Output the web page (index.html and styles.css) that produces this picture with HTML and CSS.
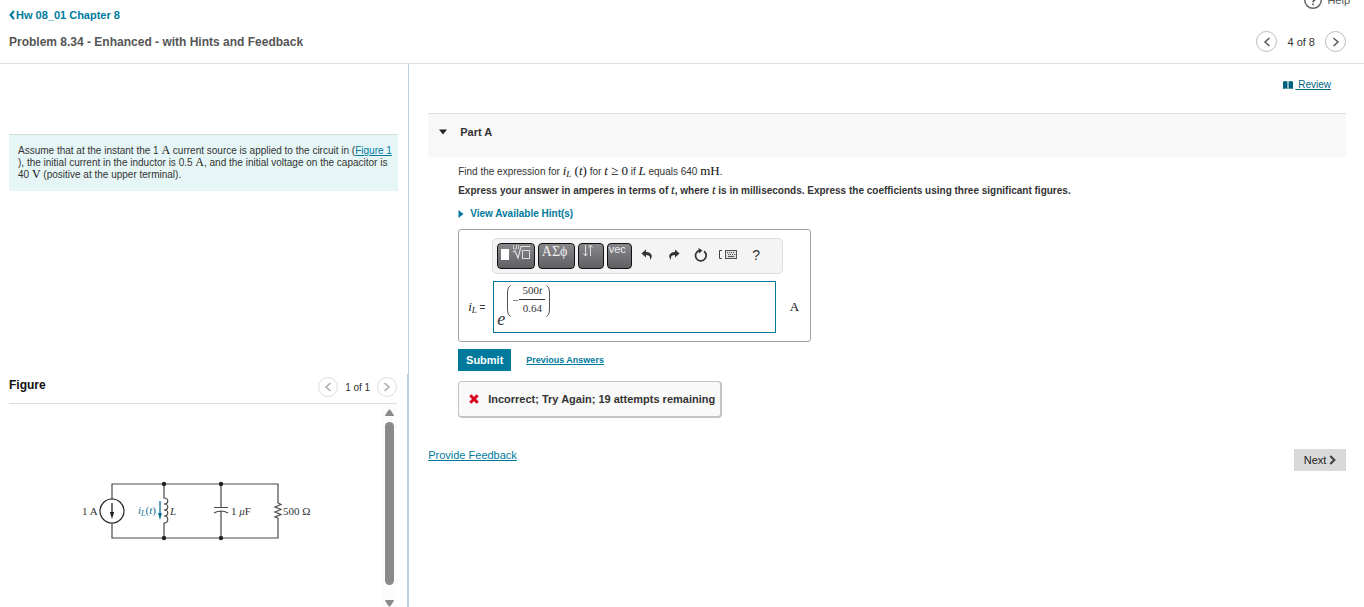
FILE: index.html
```
<!DOCTYPE html>
<html lang="en">
<head>
  <meta charset="UTF-8">
  <title>Problem 8.34 - Enhanced - with Hints and Feedback</title>
  <link rel="stylesheet" href="styles.css">
</head>
<body>

  <header class="topbar">
    <div class="titles">
      <a class="crumb" href="#">
        <svg width="6" height="10" viewBox="0 0 6 10"><path d="M5 1 L1.5 5 L5 9" fill="none" stroke="currentColor" stroke-width="2"/></svg>
        <span>Hw 08_01 Chapter 8</span>
      </a>
      <h1>Problem 8.34 - Enhanced - with Hints and Feedback</h1>
    </div>
    <div class="top-right">
      <a class="help" href="#">
        <svg width="20" height="20" viewBox="0 0 20 20"><circle cx="10" cy="10" r="8.3" fill="#fff" stroke="#666" stroke-width="1.5"/><path d="M7 8 C7 4.2 13 4.2 13 7.8 C13 10 10 10 10 12.2 M10 13.6 V15.3" fill="none" stroke="#555" stroke-width="1.6"/></svg>
        <span>Help</span>
      </a>
      <nav class="pager">
        <button class="round" aria-label="Previous item"><svg width="8" height="10" viewBox="0 0 8 10"><path d="M6.5 1 L2 5 L6.5 9" fill="none" stroke="currentColor" stroke-width="1.5"/></svg></button>
        <span>4 of 8</span>
        <button class="round" aria-label="Next item"><svg width="8" height="10" viewBox="0 0 8 10"><path d="M1.5 1 L6 5 L1.5 9" fill="none" stroke="currentColor" stroke-width="1.5"/></svg></button>
      </nav>
    </div>
  </header>

  <div class="columns">
    <aside class="left">
      <section class="intro">
        <p>Assume that at the instant the 1 <span class="math">A</span> current source is applied to the circuit in (<a href="#figure">Figure&nbsp;1</a><br>), the initial current in the inductor is 0.5 <span class="math">A</span>, and the initial voltage on the capacitor is 40 <span class="math">V</span> (positive at the upper terminal).</p>
      </section>

      <section class="figure" id="figure">
        <div class="figure-head">
          <h2>Figure</h2>
          <nav class="pager small">
            <button class="round" aria-label="Previous figure"><svg width="8" height="10" viewBox="0 0 8 10"><path d="M6.5 1 L2 5 L6.5 9" fill="none" stroke="currentColor" stroke-width="1.5"/></svg></button>
            <span>1 of 1</span>
            <button class="round" aria-label="Next figure"><svg width="8" height="10" viewBox="0 0 8 10"><path d="M1.5 1 L6 5 L1.5 9" fill="none" stroke="currentColor" stroke-width="1.5"/></svg></button>
          </nav>
        </div>
        <div class="figure-body">
          <div class="figure-view">
            <svg class="circuit" width="250" height="80" viewBox="0 0 250 80">
              <g fill="none" stroke="#4a4a4a" stroke-width="1.2">
                <path d="M42 29 V14 H208 V33 M208 48 V68 H42 V53"/>
                <circle cx="42" cy="41" r="12" stroke="#222"/>
                <!-- inductor -->
                <path d="M94 14 V28 C99 28 99 34 94 34 C99 34 99 40 94 40 C99 40 99 46 94 46 C99 46 99 53 94 53 V68"/>
                <!-- capacitor -->
                <path d="M151 14 V37 M144 37.5 H158 M144 43 Q151 39 158 43 M151 41 V68"/>
                <!-- resistor -->
                <path d="M208 33 L211 34.5 L205 37 L211 39.5 L205 42 L211 44.5 L205 47 L208 48"/>
              </g>
              <path d="M42 33 V43" stroke="#222" stroke-width="1.3"/>
              <path d="M39.8 42 H44.2 L42 49 Z" fill="#222"/>
              <path d="M90 31 V44" stroke="#0f6f93" stroke-width="1.3"/>
              <path d="M88 43 H92 L90 50 Z" fill="#0f6f93"/>
              <g fill="#222">
                <circle cx="94" cy="14" r="2.2"/><circle cx="151" cy="14" r="2.2"/>
                <circle cx="94" cy="68" r="2.2"/><circle cx="151" cy="68" r="2.2"/>
              </g>
              <g class="labels">
                <text x="12" y="45">1 A</text>
                <text x="68" y="44" class="teal"><tspan font-style="italic">i</tspan><tspan font-style="italic" font-size="8" dy="2">L</tspan><tspan dy="-2">(</tspan><tspan font-style="italic">t</tspan>)</text>
                <text x="100" y="45" font-style="italic">L</text>
                <text x="161" y="45">1 <tspan font-style="italic">μ</tspan>F</text>
                <text x="213" y="45">500 Ω</text>
              </g>
            </svg>
          </div>
          <div class="scrollbar">
            <svg width="9" height="7" viewBox="0 0 9 7"><path d="M0 7 Q0 6 3.5 1 Q4.5 0 5.5 1 Q9 6 9 7 Z" fill="#8a8a8a"/></svg>
            <span class="thumb"></span>
            <svg width="9" height="7" viewBox="0 0 9 7"><path d="M0 0 Q0 1 3.5 6 Q4.5 7 5.5 6 Q9 1 9 0 Z" fill="#8a8a8a"/></svg>
          </div>
        </div>
      </section>
    </aside>

    <main class="right">
      <div class="review">
        <svg width="10" height="8" viewBox="0 0 10 8"><path d="M0 0.5 Q2.5 -0.5 4.5 0.5 V8 Q2.5 7 0 8 Z M5.5 0.5 Q7.5 -0.5 10 0.5 V8 Q7.5 7 5.5 8 Z" fill="#00647f"/></svg>
        <a href="#">&nbsp;Review</a>
      </div>

      <div class="part-head">
        <svg width="8" height="6" viewBox="0 0 8 6"><path d="M0 0.5 H8 L4 5.5 Z" fill="#222"/></svg>
        <h2>Part A</h2>
      </div>

      <div class="part-body">
        <p class="ask">Find the expression for <span class="math"><i>i<sub>L</sub></i> (<i>t</i>)</span> for <span class="math"><i>t</i> ≥ 0</span> if <span class="math"><i>L</i></span> equals 640 <span class="math">mH</span>.</p>
        <p class="express">Express your answer in amperes in terms of <i class="math">t</i>, where <i class="math">t</i> is in milliseconds. Express the coefficients using three significant figures.</p>
        <a class="hints" href="#">
          <svg width="6" height="8" viewBox="0 0 6 8"><path d="M0.5 0 L5.5 4 L0.5 8 Z" fill="currentColor"/></svg>
          <span>View Available Hint(s)</span>
        </a>

        <div class="answer">
          <div class="toolbar">
            <button class="key key-root" aria-label="Templates"><svg width="30" height="18" viewBox="0 0 30 18"><rect x="0" y="5" width="8" height="11" fill="#fff"/><path d="M12 8 L14 7 L17 14 L20 2.5 H29" fill="none" stroke="#ddd" stroke-width="1.2"/><path d="M12.5 1 V5 H15.5 V1 M17.500 1 V5" fill="none" stroke="#ccc"/><rect x="21.5" y="6.5" width="7" height="8" fill="none" stroke="#ddd"/></svg></button>
            <button class="key key-greek">ΑΣϕ</button>
            <button class="key key-arrows" aria-label="Arrows"><svg width="10" height="14" viewBox="0 0 10 14"><path d="M2.5 1 V12 M0.5 9.5 L2.5 12 L4.5 9.5 M7.5 12 V1 M5.5 3.5 L7.5 1 L9.5 3.5" fill="none" stroke="#ddd"/></svg></button>
            <button class="key key-vec">vec</button>
            <button class="tool" aria-label="Undo"><svg width="12" height="12" viewBox="0 0 12 12"><path d="M5 0.5 L0.5 4.5 L5 8.5 V6 C8 6 9.5 7 9 11 C12.5 7 10.5 3 5 3 Z" fill="#333"/></svg></button>
            <button class="tool" aria-label="Redo"><svg width="12" height="12" viewBox="0 0 12 12"><path d="M7 0.5 L11.5 4.5 L7 8.5 V6 C4 6 2.5 7 3 11 C-0.5 7 1.5 3 7 3 Z" fill="#333"/></svg></button>
            <button class="tool" aria-label="Reset"><svg width="14" height="14" viewBox="0 0 14 14"><path d="M10 3.3 A5.3 5.3 0 1 1 5 2.6" fill="none" stroke="#333" stroke-width="1.7"/><path d="M4.5 0 L8.5 2.5 L5 5.5 Z" fill="#333"/></svg></button>
            <button class="tool" aria-label="Keyboard shortcuts"><svg width="18" height="9" viewBox="0 0 18 9"><path d="M3 0.5 H0.5 V8.5 H3" fill="none" stroke="#444"/><rect x="6.5" y="0.5" width="11" height="8" fill="#ddd" stroke="#555"/><path d="M8 2.5 H16 M9 4.5 H16" stroke="#555" stroke-dasharray="1 1"/><path d="M9 6.5 H15" stroke="#555"/></svg></button>
            <button class="tool mark" aria-label="Help">?</button>
          </div>
          <div class="equation">
            <span class="lhs" id="lhs"><i class="math">i<sub>L</sub></i> =</span>
            <div class="field" role="textbox" tabindex="0" aria-labelledby="lhs">
              <span class="base">e</span>
              <span class="exponent">
                <svg width="4" height="32" viewBox="0 0 4 32"><path d="M3.5 0.5 Q0.5 2 0.5 7 V25 Q0.5 30 3.5 31.5" fill="none" stroke="#555"/></svg>
                <span class="minus">−</span>
                <span class="fraction"><span class="num">500<i>t</i></span><span class="den">0.64</span></span>
                <svg width="4" height="32" viewBox="0 0 4 32"><path d="M0.5 0.5 Q3.5 2 3.5 7 V25 Q3.5 30 0.5 31.5" fill="none" stroke="#555"/></svg>
              </span>
            </div>
            <span class="math unit">A</span>
          </div>
        </div>

        <div class="actions">
          <button class="submit">Submit</button>
          <a href="#">Previous Answers</a>
        </div>

        <div class="feedback">
          <svg width="10" height="10" viewBox="0 0 10 10"><path d="M1.3 1.3 L8.7 8.7 M8.7 1.3 L1.3 8.7" stroke="#d9001f" stroke-width="3"/></svg>
          <span>Incorrect; Try Again; 19 attempts remaining</span>
        </div>
      </div>

      <footer class="bottom">
        <a href="#">Provide Feedback</a>
        <button class="next">Next <svg width="7" height="10" viewBox="0 0 7 10"><path d="M1.3 1 L5.3 5 L1.3 9" fill="none" stroke="#444" stroke-width="2.2"/></svg></button>
      </footer>
    </main>
  </div>

</body>
</html>
```
FILE: styles.css
```
* {
  box-sizing: border-box;
}

body {
  margin: 0;
  height: 100vh;
  display: flex;
  flex-direction: column;
  overflow: hidden;
  font-family: "Liberation Sans", Arial, sans-serif;
  font-size: 10px;
  color: #333;
  background: #fff;
}

h1, h2, p {
  margin: 0;
}

a {
  color: #007a9c;
}

svg {
  display: block;
  flex: none;
}

button {
  font-family: inherit;
  padding: 0;
  border: none;
  cursor: pointer;
}

.math {
  font-family: "Liberation Serif", "Times New Roman", serif;
  font-size: 13px;
  font-weight: normal;
  line-height: 10px;
  color: #111;
}

.math sub {
  font-size: 9px;
  line-height: 1px;
  vertical-align: -2px;
}

/* top bar */
.topbar {
  display: flex;
  justify-content: space-between;
  height: 64px;
  padding: 0 18px 0 9px;
  border-bottom: 1px solid #ddd;
}

.crumb {
  display: flex;
  align-items: center;
  gap: 1px;
  margin-top: 8px;
  font-size: 11px;
  font-weight: bold;
  line-height: 14px;
  text-decoration: none;
}

h1 {
  margin-top: 12px;
  font-size: 12px;
  line-height: 16px;
  color: #555;
}

.top-right {
  display: flex;
  flex-direction: column;
  align-items: flex-end;
}

.help {
  display: flex;
  align-items: center;
  gap: 4px;
  margin: -10px -4px 0 0;
  font-size: 11px;
  color: #555;
  text-decoration: none;
}

.pager {
  display: flex;
  align-items: center;
  gap: 10px;
  margin-top: 21px;
  font-size: 11px;
}

.round {
  display: flex;
  align-items: center;
  justify-content: center;
  width: 21px;
  height: 21px;
  border: 1px solid #bbb;
  border-radius: 50%;
  background: #fff;
  color: #555;
}

.small {
  align-items: flex-start;
  gap: 7px;
  margin: 0;
  font-size: 10px;
  line-height: 22px;
}

.small .round {
  width: 20px;
  height: 20px;
  border-color: #ddd;
  color: #aaa;
}

/* left column */
.columns {
  display: flex;
  flex: 1;
  min-height: 0;
}

.left {
  display: flex;
  flex-direction: column;
  width: 30%;
}

.intro {
  height: 310px;
  padding: 70px 10px 0 9px;
  border-right: 1px solid #b8cfe2;
}

.intro p {
  padding: 10px 3px 10px 9px;
  border-top: 1px solid #d6dedd;
  background: #e6f6f6;
  line-height: 12px;
}

.intro .math {
  font-size: 12px;
}

.figure {
  display: flex;
  flex-direction: column;
  flex: 1;
  min-height: 0;
  padding: 0 10px 0 9px;
  border-right: 2px solid #b8cfe2;
}

.figure-head {
  display: flex;
  justify-content: space-between;
  height: 30px;
  padding-top: 3px;
  border-bottom: 1px solid #ddd;
}

.figure-head h2 {
  font-size: 12px;
  line-height: 16px;
  color: #111;
}

.figure-body {
  display: flex;
  flex: 1;
  min-height: 0;
}

.figure-view {
  flex: 1;
  padding: 66px 0 0 61px;
}

.labels {
  font-family: "Liberation Serif", serif;
  font-size: 11px;
  fill: #333;
}

.teal {
  fill: #0f6f93;
}

.scrollbar {
  display: flex;
  flex-direction: column;
  align-items: center;
  gap: 6px;
  width: 15px;
  padding-top: 5px;
  background: #fcfcfc;
}

.thumb {
  flex: 1;
  width: 9px;
  margin-bottom: 9px;
  border-radius: 5px;
  background: #8a8a8a;
}

/* right column */
.right {
  flex: 1;
  padding: 0 18px 0 19px;
}

.review {
  display: flex;
  justify-content: flex-end;
  align-items: center;
  gap: 2px;
  height: 49px;
  padding: 0 15px 8px 0;
}

.review a {
  color: #00647f;
}

.part-head {
  display: flex;
  gap: 13px;
  height: 44px;
  padding: 10px 11px;
  border-top: 1px solid #ddd;
  background: #f8f8f8;
}

.part-head svg {
  margin-top: 5px;
}

.part-head h2 {
  font-size: 11px;
  line-height: 16px;
}

.part-body {
  padding: 9px 0 0 30px;
}

.ask,
.express {
  line-height: 12px;
}

.express {
  margin-top: 7px;
  font-weight: bold;
}

.hints {
  display: flex;
  align-items: center;
  gap: 6px;
  margin: 11px 0 9px;
  font-weight: bold;
  line-height: 12px;
  text-decoration: none;
}

.answer {
  width: 353px;
  height: 113px;
  padding: 8px 11px 8px 9px;
  border: 1px solid #a0a0a0;
  border-radius: 3px;
}

.toolbar {
  display: flex;
  align-items: flex-start;
  gap: 3px;
  width: 291px;
  height: 36px;
  margin-left: 24px;
  padding: 4px 0 0 4px;
  border: 1px solid #ddd;
  border-radius: 5px;
  background: #f4f4f4;
}

.key {
  display: flex;
  justify-content: center;
  height: 26px;
  border: 1px solid #111;
  border-radius: 4px;
  background: linear-gradient(#88888c, #606064);
  color: #eee;
}

.key-root {
  width: 38px;
}

.key-greek {
  width: 37px;
  padding-right: 4px;
  font-family: "Liberation Serif", serif;
  font-size: 14px;
  line-height: 15px;
}

.key-arrows {
  width: 26px;
  padding-right: 7px;
}

.key-vec {
  width: 25px;
  padding-right: 5px;
  font-size: 11px;
  line-height: 11px;
}

.tool {
  display: flex;
  align-items: center;
  justify-content: center;
  width: 24px;
  height: 23px;
  background: none;
  color: #333;
}

.mark {
  margin-left: 1px;
  font-size: 14px;
}

.equation {
  display: flex;
  align-items: center;
  margin-top: 7px;
}

.lhs {
  width: 25px;
}

.field {
  display: flex;
  width: 283px;
  height: 52px;
  padding: 3px;
  border: 1px solid #007a9c;
  font-family: "Liberation Serif", serif;
}

.base {
  align-self: flex-end;
  width: 10px;
  font-size: 18px;
  font-style: italic;
  line-height: 20px;
}

.exponent {
  display: flex;
  gap: 1px;
  height: 32px;
  font-size: 11px;
}

.minus {
  line-height: 30px;
}

.fraction {
  text-align: center;
}

.num,
.den {
  display: block;
}

.num {
  height: 15px;
  line-height: 11px;
  border-bottom: 1px solid #333;
}

.den {
  width: 26px;
  line-height: 16px;
}

.unit {
  margin-left: 14px;
}

.actions {
  display: flex;
  align-items: center;
  gap: 15px;
  margin-top: 7px;
  font-size: 9px;
  font-weight: bold;
}

.submit {
  width: 53px;
  height: 22px;
  background: #007a9c;
  color: #fff;
  font-size: 11px;
  font-weight: bold;
}

.feedback {
  display: inline-flex;
  align-items: center;
  gap: 9px;
  height: 37px;
  margin-top: 10px;
  padding: 0 5px 0 10px;
  border: 1px solid #c4c4c4;
  border-width: 1px 2px 2px 1px;
  border-radius: 4px;
  background: #f9f9f9;
  font-size: 11px;
  font-weight: bold;
}

.bottom {
  display: flex;
  justify-content: space-between;
  margin-top: 31px;
  font-size: 11px;
}

.next {
  display: flex;
  align-items: center;
  justify-content: center;
  gap: 3px;
  width: 52px;
  height: 22px;
  background: #d9d9d9;
  color: #222;
  font-size: 11px;
}
```
